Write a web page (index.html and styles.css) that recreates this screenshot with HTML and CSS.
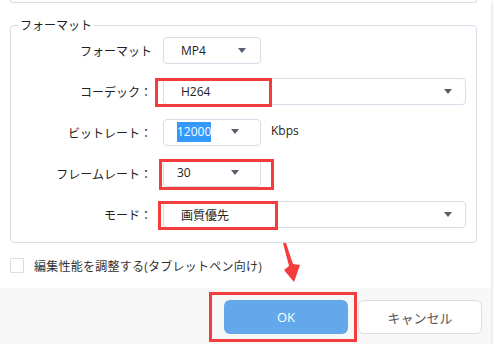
FILE: index.html
```html
<!DOCTYPE html>
<html lang="ja">
<head>
  <meta charset="UTF-8">
  <title>フォーマット</title>
  <link rel="stylesheet" href="styles.css">
</head>
<body>
  <div class="dialog">
    <div class="prev"></div>

    <fieldset class="group">
      <legend>フォーマット</legend>

      <div class="row">
        <div class="label">フォーマット</div>
        <div class="select short"><span class="value">MP4</span><span class="caret"></span></div>
      </div>

      <div class="row">
        <div class="label">コーデック：</div>
        <div class="select long">
          <span class="value">H264</span><span class="caret"></span>
          <span class="mark mark-codec"></span>
        </div>
      </div>

      <div class="row">
        <div class="label">ビットレート：</div>
        <div class="select short combo"><span class="value"><span class="hl">12000</span></span><span class="caret"></span></div>
        <div class="unit">Kbps</div>
      </div>

      <div class="row">
        <div class="label">フレームレート：</div>
        <div class="select short combo">
          <span class="value">30</span><span class="caret"></span>
          <span class="mark mark-fps"></span>
        </div>
      </div>

      <div class="row">
        <div class="label">モード：</div>
        <div class="select long">
          <span class="value">画質優先</span><span class="caret"></span>
          <span class="mark mark-mode"></span>
        </div>
      </div>
    </fieldset>

    <label class="check">
      <span class="box"></span>
      <span>編集性能を調整する(タブレットペン向け)</span>
    </label>

    <div class="footer">
      <button class="btn ok">OK<span class="mark mark-ok"></span></button>
      <button class="btn cancel">キャンセル</button>
    </div>

    <svg class="arrow" width="24" height="46" viewBox="0 0 24 46">
      <polygon points="5,3 8,3 15,24 22,25 16,42 6,30 11,26" fill="#f43c3c"/>
    </svg>
  </div>
</body>
</html>
```

FILE: styles.css
```css
body {
  margin: 0;
  background: #fff;
  font-family: "Open Sans", "Noto Sans CJK JP", sans-serif;
  font-size: 12px;
  color: #333;
}

.dialog {
  position: relative;
  width: 491px;
  background: #fff;
  box-shadow: 0 2px 4px rgba(0, 0, 0, 0.2);
}

.prev {
  margin: 0 14px 0 10px;
  height: 2px;
  border: 1px solid #d5dde6;
  border-top: 0;
  border-radius: 0 0 4px 4px;
}

.group {
  margin: 14px 14px 0 10px;
  padding: 3px 10px 14px 10px;
  border: 1px solid #d5dde6;
  border-radius: 4px;
}

.group legend {
  padding: 0 2px;
  margin-left: -3px;
  line-height: 17px;
  color: #222;
}

.row {
  display: flex;
  align-items: center;
  height: 27px;
  margin-bottom: 14px;
}

.row:last-child {
  margin-bottom: 0;
}

.label {
  width: 131px;
  text-align: right;
  margin-right: 11px;
  color: #222;
}

.select {
  position: relative;
  display: flex;
  align-items: center;
  box-sizing: border-box;
  height: 27px;
  padding: 0 14px 0 17px;
  border: 1px solid #d5dde6;
  border-radius: 4px;
  background: #fff;
}

.select.short {
  width: 98px;
}

.select.long {
  flex: 1;
  padding-right: 13px;
}

.select.combo {
  padding: 0 21px 3px 13px;
}

.value {
  flex: 1;
  color: #222;
}

.hl {
  background: #3399ff;
  color: #fff;
  padding: 1px 0 2px;
}

.caret {
  width: 0;
  height: 0;
  border-left: 4px solid transparent;
  border-right: 4px solid transparent;
  border-top: 5px solid #56606b;
}

.unit {
  margin-left: 10px;
  padding-bottom: 4px;
  color: #222;
}

.mark {
  position: absolute;
  box-sizing: border-box;
  border: 3px solid #f43c3c;
}

.mark-codec {
  left: -9px;
  top: -1px;
  width: 117px;
  height: 29px;
}

.mark-fps {
  left: -5px;
  top: -2px;
  width: 115px;
  height: 31px;
}

.mark-mode {
  left: -6px;
  top: -1px;
  width: 120px;
  height: 29px;
}

.check {
  display: flex;
  align-items: center;
  height: 45px;
  padding-left: 10px;
  color: #333;
  letter-spacing: 0.25px;
}

.box {
  box-sizing: border-box;
  width: 14px;
  height: 15px;
  margin-right: 10px;
  border: 1px solid #d5dde6;
  border-radius: 1px;
  background: #fff;
}

.footer {
  display: flex;
  justify-content: flex-end;
  gap: 10px;
  height: 56px;
  box-sizing: border-box;
  padding: 12px 9px 0 0;
  background: #f7f7f7;
}

.btn {
  position: relative;
  width: 124px;
  height: 34px;
  border-radius: 6px;
  font-family: "Open Sans", "Noto Sans CJK JP", sans-serif;
  font-size: 13px;
  cursor: pointer;
}

.btn.ok {
  background: #62a8ea;
  border: 0;
  color: #fff;
}

.btn.cancel {
  background: #fff;
  border: 1px solid #d5dde6;
  color: #555;
}

.mark-ok {
  left: -15px;
  top: -8px;
  width: 148px;
  height: 50px;
}

.arrow {
  position: absolute;
  left: 278px;
  top: 240px;
}
```
